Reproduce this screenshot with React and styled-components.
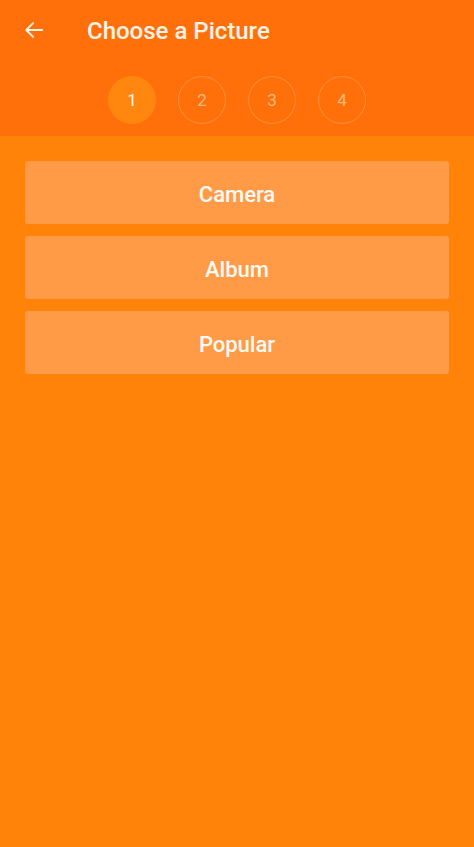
import React from "react";
import styled, { createGlobalStyle } from "styled-components";

const GlobalStyle = createGlobalStyle`
  html, body {
    margin: 0;
    padding: 0;
    background: #ff8209;
  }
  body {
    font-family: Roboto, "Noto Sans", "Liberation Sans", sans-serif;
  }
`;

const Page = styled.div`
  min-height: 847px;
  background: #ff8209;
  display: flex;
  flex-direction: column;
`;

const Header = styled.header`
  background: #ff700b;
  height: 136px;
  display: flex;
  flex-direction: column;
`;

const Toolbar = styled.div`
  height: 62px;
  display: flex;
  align-items: center;
  padding-left: 22px;
`;

const BackButton = styled.button`
  width: 24px;
  height: 24px;
  padding: 0;
  border: none;
  background: none;
  color: #fff3e6;
  display: flex;
  align-items: center;
  justify-content: center;
  margin-top: -3px;
`;

const Title = styled.h1`
  margin: 0 0 0 41px;
  font-size: 24px;
  font-weight: 500;
  color: #fff3e6;
  letter-spacing: 0;
`;

const Steps = styled.div`
  display: flex;
  justify-content: center;
  gap: 22px;
  margin-top: 14px;
`;

const Step = styled.div`
  width: 48px;
  height: 48px;
  border-radius: 50%;
  box-sizing: border-box;
  display: flex;
  align-items: center;
  justify-content: center;
  font-size: 17px;
  background: ${(p) => (p.$active ? "#ff870f" : "transparent")};
  border: ${(p) => (p.$active ? "none" : "1px solid rgba(255, 180, 110, 0.45)")};
  color: ${(p) => (p.$active ? "#fff6ec" : "rgba(255, 200, 150, 0.85)")};
`;

const Options = styled.div`
  display: flex;
  flex-direction: column;
  gap: 12px;
  padding: 25px 25px 0;
`;

const Option = styled.button`
  height: 63px;
  padding: 3px 0 0;
  border: none;
  border-radius: 3px;
  background: #ff9a46;
  color: #fffaf4;
  font-family: inherit;
  font-size: 22px;
  font-weight: 500;
  cursor: pointer;
`;

const steps = [1, 2, 3, 4];
const options = ["Camera", "Album", "Popular"];

export default function App() {
  return (
    <>
      <GlobalStyle />
      <Page>
        <Header>
          <Toolbar>
            <BackButton aria-label="Back">
              <svg width="22" height="22" viewBox="0 0 24 24" fill="none">
                <path
                  d="M21 12H4M11 4.5L3.5 12l7.5 7.5"
                  stroke="currentColor"
                  strokeWidth="2"
                  strokeLinecap="round"
                  strokeLinejoin="round"
                />
              </svg>
            </BackButton>
            <Title>Choose a Picture</Title>
          </Toolbar>
          <Steps>
            {steps.map((n) => (
              <Step key={n} $active={n === 1}>
                {n}
              </Step>
            ))}
          </Steps>
        </Header>
        <Options>
          {options.map((o) => (
            <Option key={o}>{o}</Option>
          ))}
        </Options>
      </Page>
    </>
  );
}
